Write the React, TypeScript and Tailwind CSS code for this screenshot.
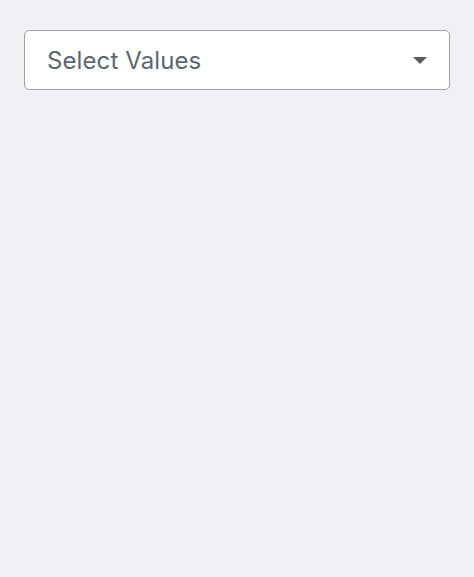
import React from "react";

export default function App() {
  return (
    <div className="w-[474px] h-[577px] bg-[#eff1f5] pt-[30px] px-[24px]" style={{ fontFamily: "Inter, 'Liberation Sans', sans-serif" }}>
      <div className="w-[426px] h-[60px] bg-white border border-[#9aa1a8] rounded-[5px] flex items-center pl-[22px] pr-[22px]">
        <span className="flex-1 text-[24px] tracking-[0.1px] text-[#5b6670] leading-none pt-[1px]">Select Values</span>
        <svg width="14" height="7" viewBox="0 0 14 7">
          <path d="M0 0 L14 0 L7 7 Z" fill="#555b61" />
        </svg>
      </div>
    </div>
  );
}
